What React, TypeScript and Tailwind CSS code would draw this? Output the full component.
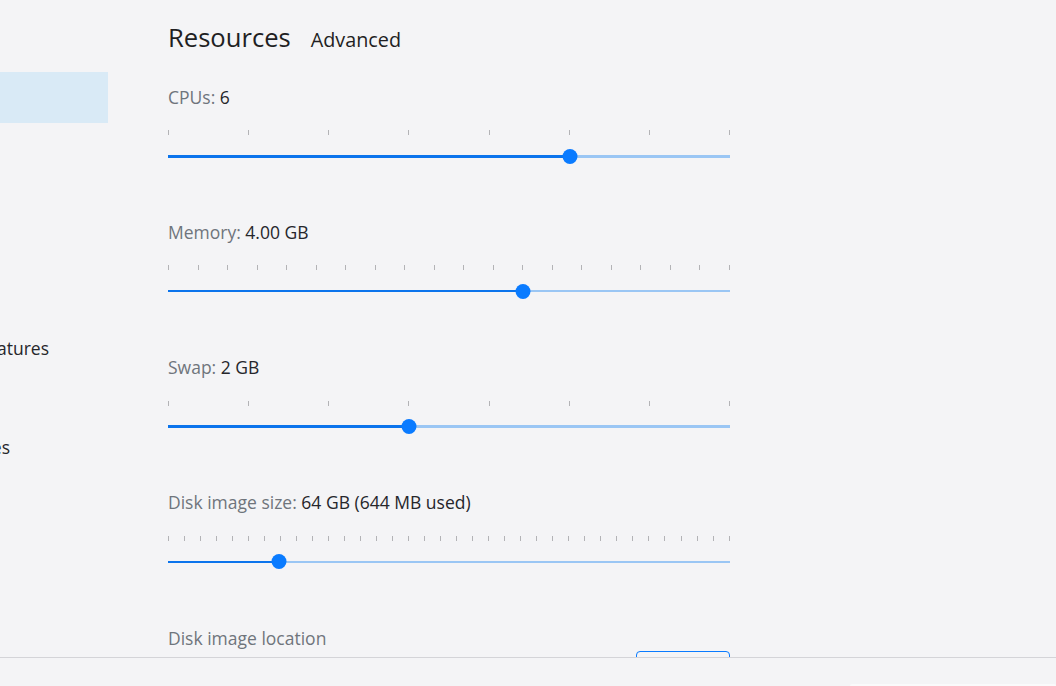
import React from "react";

type SliderDef = {
  label: string;
  value: string;
  ticks: number;
  thumb: number; // px offset from track start
  thick: number;
};

const sliders: SliderDef[] = [
  { label: "CPUs:", value: "6", ticks: 8, thumb: 401, thick: 3 },
  { label: "Memory:", value: "4.00 GB", ticks: 20, thumb: 354, thick: 2 },
  { label: "Swap:", value: "2 GB", ticks: 8, thumb: 240, thick: 3 },
  { label: "Disk image size:", value: "64 GB (644 MB used)", ticks: 36, thumb: 110, thick: 2 },
];

function Slider({ s }: { s: SliderDef }) {
  return (
    <div className="flex flex-col pb-[55.8px]">
      <div className="h-[24px] leading-[24px] text-[17.5px] whitespace-nowrap">
        <span className="text-[#6f757c]">{s.label}</span>{" "}
        <span className="text-[#26262b]">{s.value}</span>
      </div>
      <div className="mt-[21.5px] flex h-[5px] w-[562px] justify-between">
        {Array.from({ length: s.ticks }).map((_, i) => (
          <div key={i} className="h-[5px] w-px bg-[#b3b3b6]" />
        ))}
      </div>
      <div className="relative mt-[13px] flex h-[16px] w-[562px] items-center">
        <div className="flex w-full" style={{ height: s.thick }}>
          <div className="h-full bg-[#0b74ec]" style={{ width: s.thumb }} />
          <div className="h-full flex-1 bg-[#9ac6f4]" />
        </div>
        <div
          className="absolute top-[0.5px] h-[15px] w-[15px] -translate-x-1/2 rounded-full bg-[#0a7bff]"
          style={{ left: s.thumb + 0.5 }}
        />
      </div>
    </div>
  );
}

export default function App() {
  return (
    <div
      className="relative flex h-[686px] w-[1056px] overflow-hidden bg-[#f4f4f6] text-[#1f1f23]"
      style={{ fontFamily: '"Open Sans", "Noto Sans", sans-serif' }}
    >
      <aside className="flex w-[108px] shrink-0 flex-col pt-[72px]">
        <div className="h-[51px] bg-[#d9eaf6]" />
        <div className="h-[50px]" />
        <div className="h-[50px]" />
        <div className="h-[50px]" />
        <div className="h-[50px]" />
        <div className="flex h-[49px] items-center justify-end whitespace-nowrap pr-[59px] text-[17.5px] leading-[24px] text-[#26262b]">
          Experimental features
        </div>
        <div className="h-[50px]" />
        <div className="flex h-[50px] items-center justify-end whitespace-nowrap pr-[98px] text-[17.5px] leading-[24px] text-[#26262b]">
          Software updates
        </div>
      </aside>

      <main className="flex flex-col pl-[60px] pt-[21px]">
        <div className="flex h-[34px] items-baseline gap-[20px]">
          <span className="text-[25.6px] leading-[34px]">Resources</span>
          <span className="text-[19.8px] leading-[34px]">Advanced</span>
        </div>
        <div className="mt-[29.5px] flex flex-col">
          {sliders.map((s) => (
            <Slider key={s.label} s={s} />
          ))}
          <div className="h-[24px] whitespace-nowrap text-[17.5px] leading-[24px] text-[#6f757c]">
            Disk image location
          </div>
          <div className="mt-[1.5px] flex w-[562px] justify-end">
            <div className="h-[32px] w-[94px] rounded-[4px] border border-[#0a7bff]" />
          </div>
        </div>
      </main>

      <footer className="absolute bottom-0 left-0 flex h-[29px] w-full items-end justify-end border-t border-[#d4d4d8] bg-[#f4f4f6]">
        <div className="h-[2px] w-[206px] rounded-t-[3px] bg-[#fafafb]" />
      </footer>
    </div>
  );
}
